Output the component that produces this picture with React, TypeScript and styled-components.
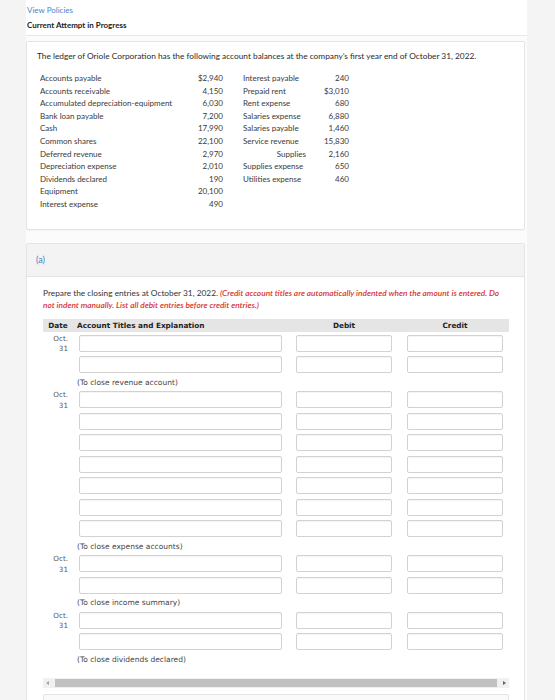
import React from "react";
import styled, { createGlobalStyle } from "styled-components";

const Global = createGlobalStyle`
  html, body { margin: 0; padding: 0; background: #f4f4f4; }
  * { box-sizing: border-box; }
`;

const Main = styled.div`
  margin-left: 26px;
  width: 501px;
  min-height: 700px;
  background: #fbfbfb;
  font-family: Lato, "Open Sans", sans-serif;
  color: #222;
`;

const Header = styled.div`
  height: 36px;
  padding: 5px 1px 0;
  border-bottom: 1px solid #e8e8e8;
  background: #fff;
  display: flex;
  flex-direction: column;
  gap: 5px;
`;

const Link = styled.a`
  font-size: 8px;
  line-height: 10px;
  color: #4a86c5;
  text-decoration: none;
`;

const Status = styled.div`
  font-size: 8px;
  line-height: 10px;
  font-weight: 700;
  color: #222;
`;

const Card = styled.section<{ $mt: number }>`
  margin-top: ${(p) => p.$mt}px;
  width: 499px;
  background: #fff;
  border: 1px solid #e4e4e4;
  border-radius: 2px;
  box-shadow: 0 1px 1px rgba(0, 0, 0, 0.03);
`;

const CardBody = styled.div`
  padding: 9px 10px 18px;
`;

const Question = styled.p`
  margin: 0;
  font-size: 8.3px;
  line-height: 10px;
  color: #2a2a2a;
`;

const Ledger = styled.div`
  margin: 11px 0 0 3px;
  display: grid;
  grid-template-columns: 148px 35px 83px 43px;
  grid-auto-rows: 12.6px;
  font-size: 8px;
  line-height: 12.6px;
  color: #3a3a3a;
`;

const LName = styled.div<{ $right?: boolean; $pl?: number }>`
  padding-left: ${(p) => p.$pl ?? 0}px;
  text-align: ${(p) => (p.$right ? "right" : "left")};
  white-space: nowrap;
`;

const LAmt = styled.div`
  text-align: right;
  white-space: nowrap;
`;

const PartHeader = styled.div`
  height: 33px;
  padding-left: 9px;
  display: flex;
  align-items: center;
  background: #f3f3f3;
  border-bottom: 1px solid #e4e4e4;
  font-size: 9px;
  color: #4a7fc1;
`;

const PartBody = styled.div`
  padding: 10px 15px 0 16px;
`;

const Instructions = styled.p`
  margin: 0;
  font-size: 8.3px;
  line-height: 12px;
  color: #333;
`;

const Red = styled.em`
  color: #d8322e;
  font-style: italic;
  font-weight: 600;
`;

const JTable = styled.div`
  margin-top: 8px;
  width: 466px;
  font-family: "DejaVu Sans", Verdana, sans-serif;
`;

const COLS = "30px 6px 203px 14px 96px 15px 96px";

const HeadGrid = styled.div`
  display: grid;
  grid-template-columns: ${COLS};
  height: 13px;
  margin-bottom: 3px;
  align-items: center;
  background: #e5e5e5;
  font-size: 7.3px;
  font-weight: 700;
  color: #222;
`;

const HCell = styled.div<{ $align?: string; $ml?: number }>`
  text-align: ${(p) => p.$align ?? "left"};
  margin-left: ${(p) => p.$ml ?? 0}px;
  white-space: nowrap;
`;

const EntryRow = styled.div`
  display: grid;
  grid-template-columns: ${COLS};
  height: 21.5px;
  align-items: start;
`;

const DateCell = styled.div`
  text-align: right;
  padding-right: 5px;
  font-size: 7.2px;
  line-height: 10.5px;
  color: #555;
  margin-top: -1px;
`;

const Input = styled.input`
  display: block;
  width: 100%;
  height: 17px;
  border: 1px solid #d2d2d2;
  border-radius: 2px;
  background: #fff;
  box-shadow: inset 0 1px 1px rgba(0, 0, 0, 0.04);
  outline: none;
  padding: 0 3px;
`;

const Note = styled.div`
  height: 9px;
  margin-bottom: 4.5px;
  padding-left: 34px;
  font-size: 7.5px;
  line-height: 9px;
  color: #444;
  white-space: nowrap;
`;

const Scrollbar = styled.div`
  margin-top: 14px;
  width: 466px;
  height: 10px;
  background: #f1f1f1;
  display: flex;
  align-items: center;
  justify-content: space-between;
  padding: 0 3px;
`;

const Arrow = styled.span<{ $dir: "l" | "r" }>`
  width: 0;
  height: 0;
  border-top: 2px solid transparent;
  border-bottom: 2px solid transparent;
  ${(p) =>
    p.$dir === "l"
      ? "border-right: 3px solid #a3a3a3;"
      : "border-left: 3px solid #606060;"}
`;

const Thumb = styled.div`
  flex: 1;
  height: 8px;
  margin: 0 6px;
  background: #c1c1c1;
`;

const NextBox = styled.div`
  margin-top: 6px;
  width: 466px;
  height: 30px;
  border: 1px solid #e4e4e4;
  border-radius: 2px;
  background: #fafafa;
`;

const left: [string, string][] = [
  ["Accounts payable", "$2,940"],
  ["Accounts receivable", "4,150"],
  ["Accumulated depreciation-equipment", "6,030"],
  ["Bank loan payable", "7,200"],
  ["Cash", "17,990"],
  ["Common shares", "22,100"],
  ["Deferred revenue", "2,970"],
  ["Depreciation expense", "2,010"],
  ["Dividends declared", "190"],
  ["Equipment", "20,100"],
  ["Interest expense", "490"],
];

const right: [string, string, boolean?][] = [
  ["Interest payable", "240"],
  ["Prepaid rent", "$3,010"],
  ["Rent expense", "680"],
  ["Salaries expense", "6,880"],
  ["Salaries payable", "1,460"],
  ["Service revenue", "15,830"],
  ["Supplies", "2,160", true],
  ["Supplies expense", "650"],
  ["Utilities expense", "460"],
];

const groups: { rows: number; note: string }[] = [
  { rows: 2, note: "(To close revenue account)" },
  { rows: 7, note: "(To close expense accounts)" },
  { rows: 2, note: "(To close income summary)" },
  { rows: 2, note: "(To close dividends declared)" },
];

export default function App() {
  return (
    <>
      <Global />
      <Main>
        <Header>
          <Link href="#">View Policies</Link>
          <Status>Current Attempt in Progress</Status>
        </Header>

        <Card $mt={5}>
          <CardBody>
            <Question>
              The ledger of Oriole Corporation has the following account balances at the
              company’s first year end of October 31, 2022.
            </Question>
            <Ledger>
              {left.map(([n, a], i) => {
                const r = right[i];
                return (
                  <React.Fragment key={n}>
                    <LName>{n}</LName>
                    <LAmt>{a}</LAmt>
                    {r ? (
                      <>
                        <LName $pl={20} $right={!!r[2]}>
                          {r[0]}
                        </LName>
                        <LAmt>{r[1]}</LAmt>
                      </>
                    ) : (
                      <>
                        <div />
                        <div />
                      </>
                    )}
                  </React.Fragment>
                );
              })}
            </Ledger>
          </CardBody>
        </Card>

        <Card $mt={13}>
          <PartHeader>(a)</PartHeader>
          <PartBody>
            <Instructions>
              Prepare the closing entries at October 31, 2022.{" "}
              <Red>
                (Credit account titles are automatically indented when the amount is
                entered. Do not indent manually. List all debit entries before credit
                entries.)
              </Red>
            </Instructions>
            <JTable>
              <HeadGrid>
                <HCell $align="center">Date</HCell>
                <div />
                <HCell $ml={-2}>Account Titles and Explanation</HCell>
                <div />
                <HCell $align="center">Debit</HCell>
                <div />
                <HCell $align="center">Credit</HCell>
              </HeadGrid>
              {groups.map((g, gi) => (
                <div key={gi}>
                  {Array.from({ length: g.rows }).map((_, ri) => (
                    <EntryRow key={ri}>
                      <DateCell>
                        {ri === 0 ? (
                          <>
                            Oct.
                            <br />
                            31
                          </>
                        ) : null}
                      </DateCell>
                      <div />
                      <Input aria-label="Account title" />
                      <div />
                      <Input aria-label="Debit" />
                      <div />
                      <Input aria-label="Credit" />
                    </EntryRow>
                  ))}
                  <Note>{g.note}</Note>
                </div>
              ))}
            </JTable>
            <Scrollbar>
              <Arrow $dir="l" />
              <Thumb />
              <Arrow $dir="r" />
            </Scrollbar>
            <NextBox />
          </PartBody>
        </Card>
      </Main>
    </>
  );
}
